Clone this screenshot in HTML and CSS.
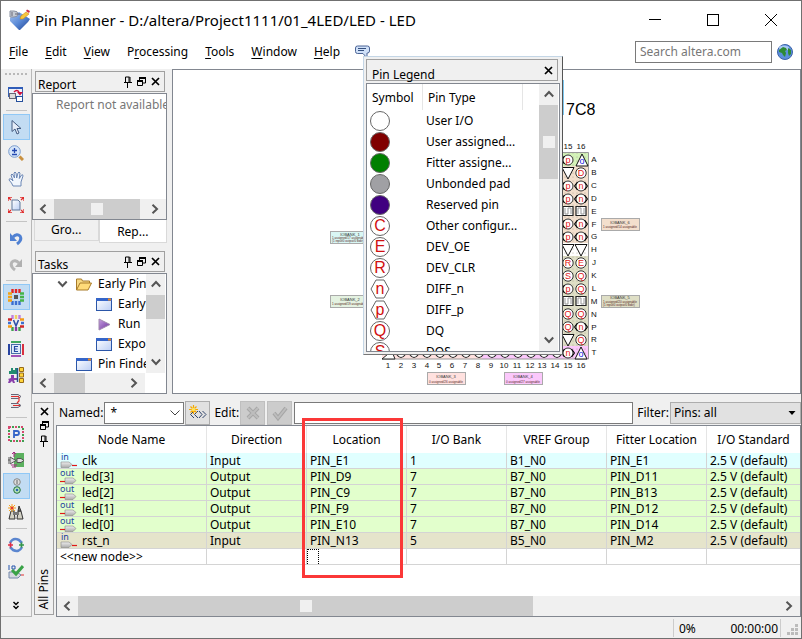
FILE: index.html
```html
<!DOCTYPE html>
<html lang="en">
<head>
<meta charset="utf-8">
<title>Pin Planner</title>
<link rel="stylesheet" href="styles.css">
</head>
<body>
<svg class="defs" aria-hidden="true">
  <defs>
    <linearGradient id="gBlue" x1="0" y1="0" x2="1" y2="1"><stop offset="0" stop-color="#a9c4ee"/><stop offset=".5" stop-color="#5b8bd8"/><stop offset="1" stop-color="#1d3f8f"/></linearGradient>
    <linearGradient id="gPale" x1="0" y1="0" x2="1" y2="1"><stop offset="0" stop-color="#fff"/><stop offset="1" stop-color="#bccff5"/></linearGradient>
    <linearGradient id="gGray" x1="0" y1="0" x2="0" y2="1"><stop offset="0" stop-color="#eee"/><stop offset="1" stop-color="#aaa"/></linearGradient>
    <linearGradient id="gPurple" x1="0" y1="0" x2="1" y2="1"><stop offset="0" stop-color="#c6a0e0"/><stop offset="1" stop-color="#6a2c9c"/></linearGradient>
    <symbol id="pin" viewBox="0 0 8 12"><path d="M1.500 1v5M1.500 1h4M5 1v5M6 1v5M0 6.500h8M3.500 7v5" fill="none" stroke="#000"/></symbol>
    <symbol id="float" viewBox="0 0 9 9"><path d="M2.500 3V1h6v5H6" fill="none" stroke="#000"/><path d="M2 1h7M0 4h6" stroke="#000" stroke-width="2"/><path d="M.5 4v4.500h5V4" fill="none" stroke="#000"/></symbol>
    <symbol id="close" viewBox="0 0 9 9"><path d="M1 1l7 7M8 1L1 8" stroke="#000" stroke-width="1.700"/></symbol>
    <symbol id="left" viewBox="0 0 8 10"><path d="M6.500 .8L2 5l4.500 4.200" fill="none" stroke="#555" stroke-width="2"/></symbol>
    <symbol id="right" viewBox="0 0 8 10"><path d="M1.500 .8L6 5 1.500 9.200" fill="none" stroke="#555" stroke-width="2"/></symbol>
    <symbol id="up" viewBox="0 0 10 8"><path d="M.8 6.500L5 2l4.200 4.500" fill="none" stroke="#555" stroke-width="2"/></symbol>
    <symbol id="down" viewBox="0 0 10 8"><path d="M.8 1.500L5 6l4.200-4.500" fill="none" stroke="#555" stroke-width="2"/></symbol>
    <symbol id="win" viewBox="0 0 16 13"><rect x=".5" y=".5" width="15" height="12" fill="url(#gPale)" stroke="#2b56a8"/><path d="M0 1.500h16" stroke="#3565c8" stroke-width="3"/><path d="M12 1.500h3" stroke="#f08a20" stroke-width="2"/></symbol>
    <symbol id="in" viewBox="0 0 18 15"><text x="1" y="7" font-size="9" fill="#1d3f9f">in</text><path d="M1 9h8l3 2.500L9 14.500H1z" fill="url(#gGray)" stroke="#888" stroke-width=".6"/><path d="M12 12.500h5" stroke="#e01818" stroke-width="1.200"/></symbol>
    <symbol id="out" viewBox="0 0 18 15"><text x="0" y="7" font-size="9" fill="#1d3f9f">out</text><path d="M5 9h8l3 2.500-3 3H5z" fill="url(#gGray)" stroke="#888" stroke-width=".6"/><path d="M0 12.500h5" stroke="#e01818" stroke-width="1.200"/></symbol>
    <symbol id="cP" viewBox="-7 -7 14 14"><circle r="5" fill="#fff" stroke="#333"/><path d="M-6.500 0l3-4M-6.500 0l3 4" stroke="#000" stroke-width="1.200"/><text y="3" class="pl">p</text></symbol>
    <symbol id="cN" viewBox="-7 -7 14 14"><circle r="5" fill="#fff" stroke="#333"/><path d="M-6.500 0l3-4M-6.500 0l3 4M6.500 0l-3-4M6.500 0l-3 4" stroke="#000" stroke-width="1.200"/><text y="3" class="pl">n</text></symbol>
    <symbol id="cQ" viewBox="-7 -7 14 14"><circle r="5.200" fill="#fff" stroke="#333"/><text y="3" class="pl">Q</text></symbol>
    <symbol id="cE" viewBox="-7 -7 14 14"><circle r="5.200" fill="#fff" stroke="#333"/><text y="3" class="pl">E</text></symbol>
    <symbol id="cR" viewBox="-7 -7 14 14"><circle r="5.200" fill="#fff" stroke="#333"/><text y="3" class="pl">R</text></symbol>
    <symbol id="cS" viewBox="-7 -7 14 14"><circle r="5.200" fill="#fff" stroke="#333"/><text y="3" class="pl">S</text></symbol>
    <symbol id="cD" viewBox="-7 -7 14 14"><circle r="5.200" fill="#fff" stroke="#333"/><text y="3" class="pl">D</text></symbol>
    <symbol id="tD" viewBox="-7 -7 14 14"><path d="M-6-5.500H6L0 6z" fill="#fff" stroke="#111"/></symbol>
    <symbol id="tU" viewBox="-7 -7 14 14"><path d="M-6 6H6L0-6z" fill="#fff" stroke="#111"/><text y="4" class="pl blue">o</text></symbol>
    <symbol id="clkL" viewBox="-7 -7 14 14"><path d="M-5-4.500H5V4.500H-5z" fill="#fff" stroke="#222" stroke-width="1.200"/><path d="M-3-3V3H0V-3H3V3" fill="none" stroke="#999"/></symbol>
    <symbol id="clkR" viewBox="-7 -7 14 14"><path d="M-5-4.500H5V4.500H-5z" fill="#fff" stroke="#222" stroke-width="1.200"/><path d="M-3 3V-3H0V3H3V-3" fill="none" stroke="#999"/></symbol>
    <pattern id="dots" width="4" height="4" patternUnits="userSpaceOnUse"><circle cx="1" cy="1" r=".5" fill="#a09888"/></pattern>
  </defs>
</svg>

<div class="window">
  <header class="titlebar">
    <svg class="app" width="22" height="22" viewBox="0 0 22 22"><path d="M1 9l9-6 11 7-2 3-8 8h-1L1 12z" fill="url(#gBlue)"/><path d="M1 2h4q4 0 4 3t-4 3H1z" fill="#c7ccd4" stroke="#8990a0"/><path d="M3 3v4M6 5h5" stroke="#667"/><path d="M11 10l1-3 5-4 3 2-6 5z" fill="#f7c63c" stroke="#d58b16" stroke-width=".6"/><path d="M17 2l1-1.500 3 1.500-1 2z" fill="#cf2c40"/></svg>
    <h1>Pin Planner - D:/altera/Project1111/01_4LED/LED - LED</h1>
    <div class="winbtns">
      <button aria-label="Minimize"><svg width="12" height="12"><path d="M0 5.500h12" stroke="#000"/></svg></button>
      <button aria-label="Maximize"><svg width="12" height="12"><rect x=".5" y=".5" width="11" height="11" fill="none" stroke="#000"/></svg></button>
      <button aria-label="Close"><svg width="12" height="12"><path d="M0 0l12 12M12 0L0 12" stroke="#000"/></svg></button>
    </div>
  </header>

  <nav class="menubar">
    <a href="#"><u>F</u>ile</a><a href="#"><u>E</u>dit</a><a href="#"><u>V</u>iew</a><a href="#">P<u>r</u>ocessing</a><a href="#"><u>T</u>ools</a><a href="#"><u>W</u>indow</a><a href="#"><u>H</u>elp</a>
    <svg class="bubble" width="15" height="14" viewBox="0 0 15 14"><path d="M2.500 1h10q2 0 2 2v3q0 2-2 2h-.5v5L8 8.500H2.500q-2 0-2-2V3q0-2 2-2z" fill="#cfe0f8" stroke="#4c6596"/><path d="M3 3.500h8M3 5.500h6" stroke="#35507f"/></svg>
    <form class="search">
      <input type="text" placeholder="Search altera.com" aria-label="Search altera.com">
      <button type="button" aria-label="Search"><svg width="16" height="16" viewBox="0 0 16 16"><circle cx="8" cy="8" r="7.500" fill="#5c8fdc" stroke="#3c62a8"/><ellipse cx="7" cy="4" rx="5" ry="2.500" fill="#a9c8f4"/><path d="M2 6l4-3 3 1 1 2-2 1 1 2-1 4-2-2-1-2-3-1zM11 4l3 2v4l-2 2-1-3z" fill="#2e8a35"/></svg></button>
    </form>
  </nav>

  <main class="work">
    <aside class="tools">
      <div class="grip"></div>
      <button aria-label="Report window"><svg viewBox="0 0 16 16"><rect x=".5" y="1.500" width="14" height="9" fill="#edf1fa" stroke="#3a62b0"/><path d="M0 2h15" stroke="#2f5cb8" stroke-width="2"/><rect x="1.500" y="7.500" width="6" height="5" fill="#ddd" stroke="#667"/><rect x="8.500" y="10.500" width="6" height="5" fill="#fff" stroke="#254f9c"/><path d="M6 6q3-3 5 0" fill="none" stroke="#d0103c" stroke-width="1.500"/><path d="M9 6h6l-3 3.500z" fill="#d0103c"/></svg></button>
      <hr>
      <button class="on" aria-label="Select"><svg viewBox="0 0 16 16"><path d="M4 1.500v11l3-2.500 2 5 2-1-2-4.500h4z" fill="#e4ecf8" stroke="#455c82"/></svg></button>
      <button aria-label="Zoom"><svg viewBox="0 0 16 16"><circle cx="6.500" cy="6.500" r="5.800" fill="#d5e5fa" stroke="#7a9ccc"/><path d="M6.500 3v5M4 5.500h5M4 9.500h5" stroke="#2348b0" stroke-width="1.300"/><path d="M11.500 11.500l3.500 3.500" stroke="#c89040" stroke-width="3"/></svg></button>
      <button aria-label="Hand"><svg viewBox="0 0 16 16"><path d="M5 15q-1-3-4-6 0-2 2-1l2 2L3 4q1-2 2 0l1.500 3L6 2q1-2 2 0l.7 5L10 2q1-2 2 0l-.7 5.500L13.500 4q1.500-1 1.500 1l-2 6v4z" fill="#f1f6fd" stroke="#6d88b5"/></svg></button>
      <button aria-label="Fit in window"><svg viewBox="0 0 16 16"><path d="M4 3h6l2 2v8H4z" fill="url(#gPale)" stroke="#60779a"/><path d="M0 4V0h4M0 0l3 3M12 0h4v4M16 0l-3 3M0 12v4h4M0 16l3-3M16 12v4h-4M16 16l-3-3" fill="none" stroke="#df2c2c" stroke-width="1.300"/></svg></button>
      <hr>
      <button aria-label="Undo"><svg viewBox="0 0 16 16"><path d="M5 7q4-4 7-1 2.500 4-3 8" fill="none" stroke="#4f80d2" stroke-width="3"/><path d="M2 3v8h7z" fill="#4f80d2"/></svg></button>
      <button aria-label="Redo"><svg viewBox="0 0 16 16"><path d="M11 7Q7 3 4 6q-2.500 4 3 8" fill="none" stroke="#b5b5b5" stroke-width="3"/><path d="M14 3v8H7z" fill="#b0b0b0"/></svg></button>
      <hr>
      <button class="on" aria-label="I/O banks"><svg viewBox="0 0 16 16"><path d="M4.500 0v4M8 0v4M11.500 0v4" stroke="#e32424" stroke-width="2.400"/><path d="M4.500 12v4M8 12v4M11.500 12v4" stroke="#3d6fd0" stroke-width="2.400"/><path d="M0 4.500h4M0 8h4M0 11.500h4" stroke="#f2a216" stroke-width="2.400"/><path d="M12 4.500h4M12 8h4M12 11.500h4" stroke="#45b349" stroke-width="2.400"/><path d="M6 6h4v4H6z" fill="#555"/></svg></button>
      <button aria-label="VREF groups"><svg viewBox="0 0 16 16"><path d="M4.500 0v4M11.500 0v4" stroke="#c080e0" stroke-width="2.400"/><path d="M8 0v4" stroke="#f0d060" stroke-width="2.400"/><path d="M4.500 12v4M11.500 12v4" stroke="#40a050" stroke-width="2.400"/><path d="M8 12v4" stroke="#8a38a8" stroke-width="2.400"/><path d="M0 4.500h4M12 11.500h4" stroke="#d02828" stroke-width="2.400"/><path d="M0 8h3M13 8h3" stroke="#3d6fd0" stroke-width="2.400"/><path d="M0 11.500h4M12 4.500h4" stroke="#f29a16" stroke-width="2.400"/><path d="M5.500 5L8 11l2.500-6" fill="none" stroke="#3050a8" stroke-width="1.600"/></svg></button>
      <button aria-label="Edges"><svg viewBox="0 0 16 16"><path d="M3 1h10" stroke="#40a860" stroke-width="2"/><path d="M3 15h10" stroke="#a050b8" stroke-width="2"/><path d="M1 3v11" stroke="#2743a0" stroke-width="2"/><path d="M15 3v11" stroke="#d83040" stroke-width="2"/><rect x="3.500" y="3.500" width="9" height="9" fill="#e0ebfb" stroke="#4870a8"/><path d="M10 5.500H6.500v5H10M6.500 8H9.500" fill="none" stroke="#2348a0" stroke-width="1.200"/></svg></button>
      <button aria-label="DQ/DQS pins"><svg viewBox="0 0 16 16"><path d="M1 4h2V1h2v2h2V1h2v2h1v4H1z" fill="#218c70"/><path d="M0 12l3-1V8h3v3h3v2H6l1 3H5l-1-2-2 2H0l1-3z" fill="#8a40ac"/><path d="M9.500 1v14" stroke="#28508c" stroke-width="1.500"/><path d="M11.500.5h4v4h-4zM11.500 6h4v4h-4zM11.500 11.500h4v4h-4z" fill="#ffd43a" stroke="#966a18"/></svg></button>
      <button aria-label="Differential pairs"><svg viewBox="0 0 16 16"><path d="M3 1.500h7l3 2-3 2H3M3 10.500h7l3 2-3 2H3" fill="#e5e5e8" stroke="#667"/><path d="M3 3.500h8M5 12.500h7M11 4v4L9 10" fill="none" stroke="#e03030" stroke-width="1.200"/></svg></button>
      <hr>
      <button aria-label="Pin migration"><svg viewBox="0 0 16 16"><rect x="1" y="1" width="14" height="14" fill="none" stroke="#d64a70" stroke-width="2" stroke-dasharray="2 4"/><rect x="1" y="1" width="14" height="14" fill="none" stroke="#3da050" stroke-width="2" stroke-dasharray="2 4" stroke-dashoffset="3"/><path d="M6 12V5h3q2 0 2 2t-2 2H6" fill="none" stroke="#3565c8" stroke-width="1.800"/></svg></button>
      <button aria-label="Live check"><svg viewBox="0 0 16 16"><path d="M6 1h10v14H6z" fill="#5bb05f"/><path d="M0 5v7M2 8H0M2 5l6 3.500-6 3.500z" fill="#ddd" stroke="#555"/><path d="M9 6.500h4l3 2-3 2H9z" fill="#ddd" stroke="#555"/><path d="M6 0v5M3 13h6M4 15h4M4 2l2-2 2 2" stroke="#a42880" fill="none"/></svg></button>
      <button class="on" aria-label="Package view"><svg viewBox="0 0 16 16"><circle cx="9" cy="4" r="3.300" fill="#ddd" stroke="#888"/><path d="M9 2v4" stroke="#666"/><circle cx="9" cy="12" r="3.300" fill="#b9e4bc" stroke="#23723a"/><circle cx="9" cy="12" r="1.300" fill="#2765b0"/></svg></button>
      <button aria-label="Find"><svg viewBox="0 0 16 16"><path d="M3 7h3l1 8H1zM10 7h3l2 8H9z" fill="#d3d1c4" stroke="#333"/><path d="M5 8h6v3H5z" fill="#777"/><path d="M11 2l2 5h-3z" fill="#777" stroke="#333"/><path d="M4 0v8M0 4h8M1 1l6 6M7 1L1 7" stroke="#f6a21a"/><circle cx="4" cy="4" r="1.500" fill="#e73a28"/></svg></button>
      <hr>
      <button aria-label="Refresh"><svg viewBox="0 0 16 16"><path d="M2 6q3-6 9-3l3 3M14 10q-3 6-9 3l-3-3" fill="none" stroke="#5b86cf" stroke-width="2.600"/><path d="M0 8h5M2.500 5.500v5" stroke="#df2c44" stroke-width="1.600"/><path d="M11 8h5M13.500 5.500v5" stroke="#329548" stroke-width="1.600"/></svg></button>
      <button aria-label="I/O assignment analysis"><svg viewBox="0 0 16 16"><path d="M1 9h8l4 3-3 3H1z" fill="#d4d8df" stroke="#7588ab"/><path d="M1 2v5M4 3h3v3H4z" stroke="#2455ac" fill="none"/><path d="M4 7l4 4 7-8" stroke="#39a247" stroke-width="3" fill="none"/><path d="M13 12h3" stroke="#e03030"/></svg></button>
      <button class="more" aria-label="More"><svg viewBox="0 0 16 16"><path d="M5.500 4L8 6.500 10.500 4M5.500 8L8 10.500 10.500 8" fill="none" stroke="#000" stroke-width="1.500"/></svg></button>
    </aside>

    <div class="area">
      <div class="upper">
        <div class="docks">
          <section class="report">
            <div class="dockhead"><h2>Report</h2><svg width="8" height="12"><use href="#pin"/></svg><svg width="9" height="9"><use href="#float"/></svg><svg width="9" height="9"><use href="#close"/></svg></div>
            <div class="frame">
              <p class="empty">Report not available</p>
              <div class="hbar"><svg width="8" height="10"><use href="#left"/></svg><div class="track"><div class="thumb rthumb"><i></i></div></div><svg width="8" height="10"><use href="#right"/></svg></div>
            </div>
            <div class="tabs"><button>Gro...</button><button class="cur">Rep...</button></div>
          </section>
          <section class="tasks">
            <div class="dockhead"><h2>Tasks</h2><svg width="8" height="12"><use href="#pin"/></svg><svg width="9" height="9"><use href="#float"/></svg><svg width="9" height="9"><use href="#close"/></svg></div>
            <div class="frame">
              <div class="scroller">
                <ul class="tree">
                  <li><svg width="11" height="8"><use href="#down"/></svg><svg width="16" height="13" viewBox="0 0 16 13"><path d="M.5 12V1h5l1 2h7v3" fill="#f7d984" stroke="#a87b29"/><path d="M.5 12L4 5h11.500L12 12z" fill="#ffdb79" stroke="#a87b29"/></svg>Early Pin Planning</li>
                  <li class="sub"><svg width="16" height="13"><use href="#win"/></svg>Early Pin Planning</li>
                  <li class="sub"><svg width="16" height="13" viewBox="0 0 16 13"><path d="M3 1l11 5.500L3 12z" fill="url(#gPurple)" stroke="#a18aaf"/></svg>Run <span class="warm">I/O</span></li>
                  <li class="sub"><svg width="16" height="13"><use href="#win"/></svg>Export Pins</li>
                  <li class="leaf"><svg width="16" height="13"><use href="#win"/></svg>Pin Finder</li>
                </ul>
                <div class="vbar"><svg width="10" height="8"><use href="#up"/></svg><div class="vtrack"><div class="thumb tthumb"></div></div><svg width="10" height="8"><use href="#down"/></svg></div>
              </div>
              <div class="hbar short"><svg width="8" height="10"><use href="#left"/></svg><div class="track"><div class="thumb hthumb"></div></div><svg width="8" height="10"><use href="#right"/></svg></div>
            </div>
          </section>
        </div>

        <section class="canvas">
          <svg class="chip" viewBox="173 70 627 324" preserveAspectRatio="xMinYMin meet">
            <path d="M563.500 80v35" stroke="#7cc8f0"/>
            <text x="566" y="115" font-size="16">7C8</text>
            <g class="bank">
              <rect x="330.500" y="231.500" width="40" height="12" fill="#d9f7f4"/><text x="350" y="236">IOBANK_1</text><text x="332" y="239" class="s">1 assigned/17 assignable</text><text x="332" y="242" class="s">(1 input/0 output/0 bidir)</text>
              <rect x="330.500" y="295.500" width="40" height="12" fill="#e4f2e1"/><text x="350" y="301">IOBANK_2</text><text x="332" y="305" class="s">1 assigned/19 assignable</text>
              <rect x="427.500" y="372.500" width="38" height="12" fill="#ffe1df"/><text x="446" y="378">IOBANK_3</text><text x="429" y="383" class="s">0 assigned/26 assignable</text>
              <rect x="504.500" y="372.500" width="38" height="12" fill="#fbc8fb"/><text x="523" y="378">IOBANK_4</text><text x="506" y="383" class="s">0 assigned/27 assignable</text>
              <rect x="601.500" y="218.500" width="38" height="12" fill="#f3dfcd"/><text x="620" y="224">IOBANK_6</text><text x="603" y="228" class="s">1 assigned/14 assignable</text>
              <rect x="601.500" y="295.500" width="38" height="12" fill="#dfdfc6"/><text x="620" y="299">IOBANK_5</text><text x="603" y="303" class="s">1 assigned/20 assignable</text><text x="603" y="306" class="s">(1 input/0 output/0 bidir)</text>
            </g>
            <path d="M382 340h100v19H382z" fill="#ffe1df"/><path d="M482 340h106v19H482z" fill="#fbc8fb"/>
            <path d="M562 153h26v13h-26z" fill="#d3f2b8"/><path d="M562 166h26v77h-26z" fill="#f3dfcd"/><path d="M562 243h26v13h-26z" fill="#fff"/><path d="M562 256h26v90h-26z" fill="#dfdfc6"/><path d="M562 346h26v13h-26z" fill="#fbc8fb"/>
            <path d="M562 153h26v205h-26z" fill="url(#dots)"/>
            <path d="M562 152.500h26.500v206.500H382" fill="none" stroke="#999"/>
            <path d="M382 359l6-5h5l2 5z" fill="#fff" stroke="#222"/>
            <path d="M397 355q4 5 8 0m5 0q4 5 8 0m5 0q4 5 8 0m5 0q4 5 8 0m5 0q4 5 8 0m5 0q4 5 8 0m5 0q4 5 8 0m5 0q4 5 8 0m5 0q4 5 8 0m5 0q4 5 8 0m5 0q4 5 8 0m5 0q4 5 8 0m5 0q4 5 8 0" fill="#fff" stroke="#222" stroke-width="1.200"/>
            <g>
              <use href="#cP" x="561" y="153" width="14" height="14"/><use href="#tU" x="575" y="153" width="14" height="14"/>
              <use href="#tD" x="561" y="166" width="14" height="14"/><use href="#cD" x="574" y="166" width="14" height="14"/>
              <use href="#cP" x="561" y="179" width="14" height="14"/><use href="#cN" x="574" y="179" width="14" height="14"/>
              <use href="#cP" x="561" y="192" width="14" height="14"/><use href="#cN" x="574" y="192" width="14" height="14"/>
              <use href="#clkL" x="561" y="204" width="14" height="14"/><use href="#clkR" x="574" y="204" width="14" height="14"/>
              <use href="#cP" x="561" y="217" width="14" height="14"/><use href="#cN" x="574" y="217" width="14" height="14"/>
              <use href="#cP" x="561" y="230" width="14" height="14"/><use href="#cN" x="574" y="230" width="14" height="14"/>
              <use href="#tD" x="561" y="243" width="14" height="14"/><use href="#tD" x="574" y="243" width="14" height="14"/>
              <use href="#cR" x="561" y="256" width="14" height="14"/><use href="#cE" x="574" y="256" width="14" height="14"/>
              <use href="#cS" x="561" y="269" width="14" height="14"/><use href="#cQ" x="574" y="269" width="14" height="14"/>
              <use href="#cP" x="561" y="282" width="14" height="14"/><use href="#cQ" x="574" y="282" width="14" height="14"/>
              <use href="#clkL" x="561" y="294" width="14" height="14"/><use href="#clkR" x="574" y="294" width="14" height="14"/>
              <use href="#cQ" x="561" y="307" width="14" height="14"/><use href="#cQ" x="574" y="307" width="14" height="14"/>
              <use href="#cQ" x="561" y="320" width="14" height="14"/><use href="#cN" x="574" y="320" width="14" height="14"/>
              <use href="#tD" x="561" y="333" width="14" height="14"/><use href="#cQ" x="574" y="333" width="14" height="14"/>
              <use href="#cN" x="561" y="346" width="14" height="14"/><use href="#tU" x="574" y="346" width="14" height="14"/>
            </g>
            <g class="axis">
              <text x="568" y="149">15</text><text x="581" y="149">16</text>
              <text x="594" y="162">A</text><text x="594" y="175">B</text><text x="594" y="188">C</text><text x="594" y="201">D</text><text x="594" y="214">E</text><text x="594" y="227">F</text><text x="594" y="239">G</text><text x="594" y="252">H</text><text x="594" y="265">J</text><text x="594" y="278">K</text><text x="594" y="291">L</text><text x="594" y="304">M</text><text x="594" y="317">N</text><text x="594" y="330">P</text><text x="594" y="342">R</text><text x="594" y="355">T</text>
              <text x="388" y="368">1</text><text x="401" y="368">2</text><text x="414" y="368">3</text><text x="427" y="368">4</text><text x="439" y="368">5</text><text x="452" y="368">6</text><text x="465" y="368">7</text><text x="478" y="368">8</text><text x="491" y="368">9</text><text x="504" y="368">10</text><text x="517" y="368">11</text><text x="530" y="368">12</text><text x="542" y="368">13</text><text x="555" y="368">14</text><text x="568" y="368">15</text><text x="581" y="368">16</text>
            </g>
          </svg>
        </section>
      </div>

      <section class="allpins">
        <div class="sidehead">
          <svg width="9" height="9"><use href="#close"/></svg><svg width="9" height="9"><use href="#float"/></svg><svg width="8" height="12"><use href="#pin"/></svg>
          <h2>All Pins</h2>
        </div>
        <div class="pins">
          <div class="filters">
            <label for="named">Named:</label>
            <div class="pick named"><select id="named"><option>*</option></select><svg width="10" height="8" viewBox="0 0 10 8"><path d="M.5 1.500L5 6l4.500-4.500" fill="none" stroke="#444"/></svg></div>
            <button class="tb" aria-label="Node finder"><svg width="18" height="16" viewBox="0 0 18 16"><path d="M5 6L1.500 9.500 5 13M9 6L5.500 9.500 9 13M10 6l3 3.500-3 3.500M13.500 6L17 9.500 13.500 13" fill="none" stroke="#31456b"/><path d="M4.500 0v9M0 4.500h9M1.500 1.500l6 6M7.500 1.500l-6 6" stroke="#f5a800" stroke-width="1.200"/><circle cx="4.500" cy="4.500" r="1.800" fill="#ffe45c"/></svg></button>
            <label for="edit" class="lead">Edit:</label>
            <button class="tb off" aria-label="Cancel"><svg width="16" height="16" viewBox="0 0 16 16"><path d="M3 3l10 10M13 3L3 13" stroke="#a6a6a6" stroke-width="4"/><path d="M3 3l10 10M13 3L3 13" stroke="#bdbdbd" stroke-width="2"/></svg></button>
            <button class="tb off" aria-label="Accept"><svg width="16" height="16" viewBox="0 0 16 16"><path d="M2 8l4 5 8-10" fill="none" stroke="#a6a6a6" stroke-width="4"/><path d="M2 8l4 5 8-10" fill="none" stroke="#bdbdbd" stroke-width="2"/></svg></button>
            <input id="edit" type="text">
            <label for="filter" class="lead">Filter:</label>
            <div class="pick filter"><select id="filter"><option>Pins: all</option></select><svg width="10" height="8" viewBox="0 0 10 8"><path d="M1.500 2h7L5 6z"/></svg></div>
          </div>
          <div class="grid">
            <table>
              <colgroup><col class="cname"><col class="cfix"><col class="cfix"><col class="cfix"><col class="cfix"><col class="cfix"><col></colgroup>
              <thead><tr><th>Node Name</th><th>Direction</th><th>Location</th><th>I/O Bank</th><th>VREF Group</th><th>Fitter Location</th><th>I/O Standard</th></tr></thead>
              <tbody>
                <tr class="b1"><td><svg><use href="#in"/></svg>clk</td><td>Input</td><td>PIN_E1</td><td>1</td><td>B1_N0</td><td>PIN_E1</td><td>2.5 V (default)</td></tr>
                <tr class="b7"><td><svg><use href="#out"/></svg>led[3]</td><td>Output</td><td>PIN_D9</td><td>7</td><td>B7_N0</td><td>PIN_D11</td><td>2.5 V (default)</td></tr>
                <tr class="b7"><td><svg><use href="#out"/></svg>led[2]</td><td>Output</td><td>PIN_C9</td><td>7</td><td>B7_N0</td><td>PIN_B13</td><td>2.5 V (default)</td></tr>
                <tr class="b7"><td><svg><use href="#out"/></svg>led[1]</td><td>Output</td><td>PIN_F9</td><td>7</td><td>B7_N0</td><td>PIN_D12</td><td>2.5 V (default)</td></tr>
                <tr class="b7"><td><svg><use href="#out"/></svg>led[0]</td><td>Output</td><td>PIN_E10</td><td>7</td><td>B7_N0</td><td>PIN_D14</td><td>2.5 V (default)</td></tr>
                <tr class="b5"><td><svg><use href="#in"/></svg>rst_n</td><td>Input</td><td>PIN_N13</td><td>5</td><td>B5_N0</td><td>PIN_M2</td><td>2.5 V (default)</td></tr>
                <tr><td>&lt;&lt;new node&gt;&gt;</td><td></td><td class="focus"><i></i></td><td></td><td></td><td></td><td></td></tr>
              </tbody>
            </table>
            <div class="hbar"><svg width="8" height="10"><use href="#left"/></svg><div class="track"><div class="thumb gthumb"><i></i></div></div><svg width="8" height="10"><use href="#right"/></svg></div>
            <div class="highlight"></div>
          </div>
        </div>
      </section>
    </div>

    <section class="legend">
      <div class="dockhead"><h2>Pin Legend</h2><svg width="9" height="9"><use href="#close"/></svg></div>
      <div class="frame">
        <table>
          <thead><tr><th>Symbol</th><th>Pin Type</th><th></th></tr></thead>
          <tbody>
            <tr><td><svg viewBox="-10 -10 20 20"><circle r="9.500" fill="#fff" class="ring"/></svg></td><td colspan="2">User I/O</td></tr>
            <tr><td><svg viewBox="-10 -10 20 20"><circle r="9.500" fill="#800000" class="ring"/></svg></td><td colspan="2">User assigned...</td></tr>
            <tr><td><svg viewBox="-10 -10 20 20"><circle r="9.500" fill="#008000" class="ring"/></svg></td><td colspan="2">Fitter assigne...</td></tr>
            <tr><td><svg viewBox="-10 -10 20 20"><circle r="9.500" fill="#a0a0a4" class="ring"/></svg></td><td colspan="2">Unbonded pad</td></tr>
            <tr><td><svg viewBox="-10 -10 20 20"><circle r="9.500" fill="#400080" class="ring"/></svg></td><td colspan="2">Reserved pin</td></tr>
            <tr><td><svg viewBox="-10 -10 20 20"><circle r="9.500" fill="#fff" class="ring"/><text y="5">C</text></svg></td><td colspan="2">Other configur...</td></tr>
            <tr><td><svg viewBox="-10 -10 20 20"><circle r="9.500" fill="#fff" class="ring"/><text y="5">E</text></svg></td><td colspan="2">DEV_OE</td></tr>
            <tr><td><svg viewBox="-10 -10 20 20"><circle r="9.500" fill="#fff" class="ring"/><text y="5">R</text></svg></td><td colspan="2">DEV_CLR</td></tr>
            <tr><td><svg viewBox="-10 -10 20 20"><path d="M-9 0l5-9h8l5 9-5 9h-8z" fill="#fff" class="ring"/><text y="5">n</text></svg></td><td colspan="2">DIFF_n</td></tr>
            <tr><td><svg viewBox="-10 -10 20 20"><path d="M-9 0l5-9h8l5 9-5 9h-8z" fill="#fff" class="ring"/><text y="5">p</text></svg></td><td colspan="2">DIFF_p</td></tr>
            <tr><td><svg viewBox="-10 -10 20 20"><circle r="9.500" fill="#fff" class="ring"/><text y="5">Q</text></svg></td><td colspan="2">DQ</td></tr>
            <tr><td><svg viewBox="-10 -10 20 20"><circle r="9.500" fill="#fff" class="ring"/><text y="5">S</text></svg></td><td colspan="2">DQS</td></tr>
          </tbody>
        </table>
        <div class="vbar"><svg width="10" height="8"><use href="#up"/></svg><div class="vtrack"><div class="thumb lthumb"><i></i></div></div><svg width="10" height="8"><use href="#down"/></svg></div>
      </div>
    </section>
  </main>

  <footer class="status"><span class="pct">0%</span><span class="time">00:00:00</span><svg width="12" height="12"><path d="M8 0h3v3H8zM4 4h3v3H4zM8 4h3v3H8zM0 8h3v3H0zM4 8h3v3H4zM8 8h3v3H8z" fill="#bbb"/></svg></footer>
</div>
</body>
</html>
```

FILE: styles.css
```css
* { box-sizing: border-box; }
body { margin: 0; font: 12px/16px "Noto Sans", "Open Sans", sans-serif; color: #000; background: #f0f0f0; }
h1, h2, p, ul { margin: 0; padding: 0; font-weight: normal; }
button, input, select { font: inherit; color: inherit; margin: 0; padding: 0; border-radius: 0; }
button { border: 0; background: none; display: grid; place-items: center; }
svg { display: block; flex: none; }
.defs { position: absolute; width: 0; height: 0; }

.window { height: 100vh; display: flex; flex-direction: column; border: 1px solid #707070; overflow: hidden; }

.titlebar { height: 37px; flex: none; display: flex; align-items: center; background: #fff; padding-left: 8px; }
.titlebar h1 { flex: 1; margin-left: 4px; font-size: 15px; line-height: 20px; white-space: nowrap; }
.winbtns { display: flex; padding-right: 1px; }
.winbtns button { width: 58px; height: 34px; }

.menubar { height: 31px; flex: none; display: flex; align-items: center; gap: 17px; background: #fff; padding-left: 8px; padding-bottom: 4px; }
.menubar a { color: inherit; text-decoration: none; }
.menubar u { text-underline-offset: 2px; }
.bubble { margin-left: -2px; }
.search { margin-left: auto; display: flex; align-items: center; gap: 5px; padding-right: 8px; }
.search input { width: 137px; height: 22px; border: 1px solid #7a7a7a; padding: 0 4px; background: #fff; }
.search input::placeholder { color: #777; opacity: 1; }

.work { flex: 1; min-height: 0; display: flex; position: relative; }
.tools { width: 31px; flex: none; display: flex; flex-direction: column; align-items: center; border-right: 1px solid #b8b8b8; border-bottom: 1px solid #b8b8b8; }
.grip { height: 12px; flex: none; width: 23px; border-top: 4px solid #f0f0f0; background: repeating-linear-gradient(90deg, #b8b8b8 0 2px, #f0f0f0 2px 4px) 0 0 / 100% 2px no-repeat; }
.tools button { width: 27px; height: 26px; flex: none; border: 1px solid transparent; }
.tools button svg { width: 16px; height: 16px; }
.tools .on { background: #c2dcf3; border-color: #90c8f6; }
.tools hr { width: 21px; height: 1px; flex: none; margin: 3px 0; border: 0; background: #c4c4c4; }
.tools .more { margin-top: auto; height: 20px; }

.area { flex: 1; min-width: 0; display: flex; flex-direction: column; }
.upper { flex: 1; min-height: 0; display: flex; gap: 5px; }
.docks { width: 135px; flex: none; display: flex; flex-direction: column; gap: 8px; padding-top: 2px; }
.report, .tasks { display: flex; flex-direction: column; min-height: 0; }
.report { flex: 172; }
.tasks { flex: 143; }
.dockhead { height: 21px; flex: none; margin: 0 2px 1px 3px; padding: 0 4px 0 2px; display: flex; align-items: center; gap: 5px; border: 1px solid #a0a0a0; }
.dockhead h2 { flex: 1; font-size: 12px; line-height: 16px; padding-top: 7px; white-space: nowrap; }
.frame { flex: 1; min-height: 0; border: 1px solid #828790; background: #fff; display: flex; flex-direction: column; overflow: hidden; }
.empty { flex: 1; padding: 3px 0 0 23px; color: #777; white-space: nowrap; }
.hbar { height: 20px; flex: none; display: flex; align-items: center; gap: 7px; padding: 0 7px 0 6px; background: #f0f0f0; }
.track { flex: 1; height: 100%; }
.thumb { background: #cdcdcd; display: grid; place-items: center; }
.thumb i { width: 12px; height: 12px; background: #f0f0f0; }
.track .thumb { height: 100%; }
.rthumb { width: 95%; }
.hthumb { width: 45%; }
.gthumb { width: 65%; }
.short { margin-right: 21px; }
.tabs { display: flex; height: 23px; flex: none; padding-left: 2px; }
.tabs button { flex: 16; height: 21px; border: 1px solid #d9d9d9; border-top: 0; }
.tabs .cur { flex: 17; height: 23px; padding-top: 2px; background: #fff; }

.scroller { flex: 1; min-height: 0; display: flex; }
.tree { flex: 1; min-width: 0; overflow: hidden; list-style: none; padding-left: 24px; }
.tree li { height: 20px; display: flex; align-items: center; gap: 6px; white-space: nowrap; }
.tree li svg:first-child:not(:only-of-type) { margin-right: 2px; }
.tree .sub { padding-left: 39px; }
.tree .leaf { padding-left: 19px; }
.warm { color: #f08a20; }
.vbar { width: 19px; flex: none; margin-right: 1px; display: flex; flex-direction: column; align-items: center; gap: 7px; padding: 6px 0 7px; background: #f0f0f0; }
.vtrack { flex: 1; width: 100%; }
.tthumb { height: 42%; }
.lthumb { height: 33%; }

.canvas { flex: 1; min-width: 0; border: 1px solid #828790; background: #fff; overflow: hidden; }
.chip { width: 100%; height: auto; font-family: "Liberation Sans", sans-serif; }
.pl { font: 9px "Liberation Sans", sans-serif; text-anchor: middle; fill: #e01818; }
.blue { fill: #2020e0; }
.axis text { font-size: 8px; text-anchor: middle; fill: #111; }
.bank rect { stroke: #aaa; }
.bank text { font-size: 4px; text-anchor: middle; fill: #333; }
.bank .s { font-size: 3px; text-anchor: start; fill: #522; }

.allpins { height: 223px; flex: none; display: flex; padding-top: 6px; }
.sidehead { width: 20px; flex: none; margin: 2px; padding: 4px 0; display: flex; flex-direction: column; align-items: center; gap: 5px; border: 1px solid #a0a0a0; }
.sidehead h2 { margin-top: auto; font-size: 12px; line-height: 16px; writing-mode: vertical-rl; transform: rotate(180deg); }
.pins { flex: 1; min-width: 0; display: flex; flex-direction: column; }
.filters { height: 25px; flex: none; display: flex; align-items: center; gap: 1px; padding-left: 3px; }
.pick { display: grid; align-items: center; height: 22px; }
.pick > * { grid-area: 1 / 1; }
.pick svg { justify-self: end; margin-right: 4px; pointer-events: none; }
.pick select { appearance: none; width: 100%; height: 22px; padding: 0 5px; border: 1px solid #7a7a7a; background: #fff; }
.named { width: 80px; }
.filter { width: 131px; }
.filter select { background: #e1e1e1; border-color: #adadad; padding: 0 3px; }
.tb { width: 25px; height: 24px; flex: none; border: 1px solid #adadad; background: #e1e1e1; }
.tb.off { background: #ccc; border-color: #bfbfbf; margin-right: 1px; }
.lead { margin-left: 3px; }
.filters input { flex: 1; min-width: 0; height: 22px; border: 1px solid #7a7a7a; padding: 0 4px; background: #fff; }

.grid { flex: 1; min-height: 0; position: relative; display: flex; flex-direction: column; border: 1px solid #828790; background: #fff; }
.grid table { width: 100%; table-layout: fixed; border-collapse: separate; border-spacing: 0; margin-bottom: auto; }
.cname { width: 150px; }
.cfix { width: 100px; }
.grid th { height: 27px; padding: 1px 0 0; font-weight: normal; text-align: center; border-right: 1px solid #e5e5e5; white-space: nowrap; }
.grid td { height: 16px; padding: 0 3px; line-height: 15px; border-right: 1px solid #d4d4d4; border-bottom: 1px solid #d4d4d4; white-space: nowrap; }
.grid th:last-child, .grid td:last-child { border-right: 0; }
.grid td svg { display: inline-block; width: 18px; height: 15px; margin-right: 4px; vertical-align: top; }
.b1 { background: #e0ffff; }
.b7 { background: #e2ffcc; }
.b5 { background: #e5e4cb; }
.grid .focus { padding: 0; }
.focus i { display: block; width: 12px; height: 15px; border: 1px dotted #000; border-bottom: 0; }
.highlight { position: absolute; left: 245px; top: -8px; width: 101px; height: 160px; border: 3px solid #fb3838; pointer-events: none; }

.legend { position: absolute; left: 362px; top: -13px; width: 200px; height: 299px; display: flex; flex-direction: column; padding: 2px 2px 2px 2px; background: #f0f0f0; border: 1px solid #c4d6e6; border-right-color: #555; border-bottom-color: #777; }
.legend .dockhead { height: 22px; margin: 0 2px 2px 0; padding-left: 5px; }
.legend .dockhead h2 { padding-top: 9px; }
.legend .frame { flex-direction: row; }
.legend table { flex: 1; align-self: flex-start; border-spacing: 0; table-layout: fixed; }
.legend th { height: 26px; padding: 2px 5px 0; font-weight: normal; text-align: left; border-right: 1px solid #e5e5e5; white-space: nowrap; }
.legend th:first-child { width: 56px; }
.legend th:nth-child(2) { width: 100px; }
.legend th:last-child { border-right: 0; }
.legend td { height: 21px; padding: 0 3px; white-space: nowrap; }
.legend td svg { width: 20px; height: 20px; }
.ring { stroke: #666; }
.legend td text { font: 16px "Liberation Sans", sans-serif; text-anchor: middle; fill: #d01010; }

.status { height: 21px; flex: none; display: flex; align-items: center; justify-content: flex-end; }
.pct { width: 45px; padding: 2px 0 0 5px; border-left: 1px solid #ccc; }
.time { padding: 2px 2px 0; border-right: 1px solid #ccc; width: 63px; text-align: right; }
.status svg { margin: 5px 2px 0 6px; }
```
